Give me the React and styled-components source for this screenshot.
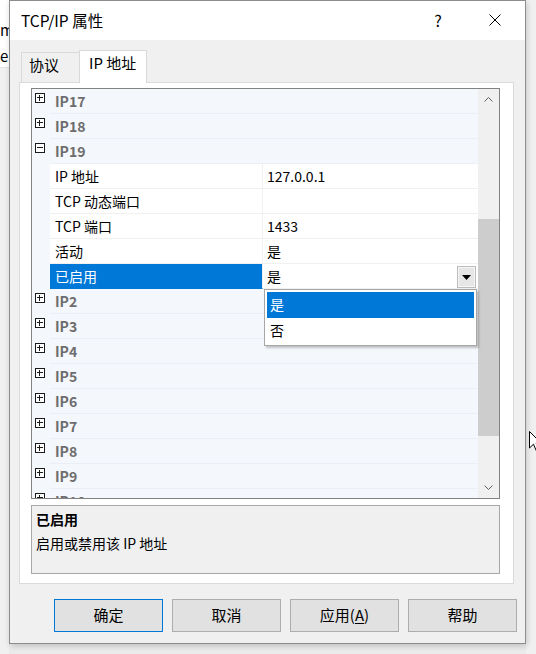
import React from "react";
import styled, { createGlobalStyle } from "styled-components";

const FONT = `"Noto Sans CJK SC", "Noto Sans", sans-serif`;

const GlobalStyle = createGlobalStyle`
  html, body { margin: 0; padding: 0; }
  body { background: #f0f0f0; font-family: ${FONT}; overflow: hidden; }
  *, *::before, *::after { box-sizing: border-box; }
`;

const Screen = styled.div`
  position: relative;
  display: flex;
  width: 536px;
  height: 654px;
  overflow: hidden;
  background: #f0f0f0;
  font-family: ${FONT};
  color: #000;
`;

const BackWindow = styled.div`
  width: 9px;
  flex: none;
  display: flex;
  flex-direction: column;
`;

const BackWindowTop = styled.div`
  height: 68px;
  flex: none;
  background: #fff;
  overflow: hidden;
  padding-top: 17px;
  font-size: 15px;
  line-height: 26px;
  white-space: nowrap;
  border-bottom: 1px solid #e2e2e2;
`;

const BackWindowRest = styled.div`
  flex: 1;
  background: #f0f0f0;
`;

const DialogColumn = styled.div`
  width: 517px;
  flex: none;
  display: flex;
  flex-direction: column;
`;

const Dialog = styled.div`
  position: relative;
  z-index: 1;
  height: 644px;
  flex: none;
  display: flex;
  flex-direction: column;
  border: 1px solid #8d8d8d;
  background: #f0f0f0;
  box-shadow: 1px 2px 6px rgba(0, 0, 0, 0.18);
`;

const BelowDialog = styled.div`
  flex: 1;
  background: #ebebeb;
`;

const RightStrip = styled.div`
  flex: 1;
  background: #f0f0f0;
`;

const TitleBar = styled.div`
  height: 39px;
  flex: none;
  display: flex;
  align-items: center;
  background: #fff;
  padding-left: 11px;
  padding-right: 8px;
  padding-bottom: 2px;
`;

const Title = styled.div`
  flex: 1;
  font-size: 15.5px;
  line-height: 20px;
`;

const CaptionButton = styled.div`
  width: ${(p) => p.$w}px;
  margin-right: ${(p) => p.$mr || 0}px;
  display: flex;
  align-items: center;
  justify-content: center;
  font-size: 16px;
  line-height: 20px;
`;

const Body = styled.div`
  flex: 1;
  display: flex;
  flex-direction: column;
  padding: 10px 0 11px 9px;
`;

const TabStrip = styled.div`
  height: 32px;
  flex: none;
  display: flex;
  align-items: flex-start;
  padding-left: 2px;
`;

const Tab = styled.div`
  position: relative;
  z-index: ${(p) => (p.$active ? 2 : 0)};
  width: ${(p) => p.$w}px;
  height: ${(p) => (p.$active ? 33 : 30)}px;
  margin-top: ${(p) => (p.$active ? 0 : 2)}px;
  padding-left: ${(p) => p.$pl}px;
  padding-top: 2px;
  background: ${(p) => (p.$active ? "#fff" : "#f0f0f0")};
  border: 1px solid #d9d9d9;
  border-bottom: none;
  border-right: ${(p) => (p.$active ? "1px solid #d9d9d9" : "none")};
  font-size: 15px;
  line-height: 20px;
  white-space: nowrap;
`;

const TabPanel = styled.div`
  position: relative;
  z-index: 1;
  display: flex;
  flex-direction: column;
  margin-right: 11px;
  background: #fff;
  border: 1px solid #dadada;
  padding: 5px 13px 9px 11px;
`;

const Grid = styled.div`
  position: relative;
  height: 411px;
  flex: none;
  display: flex;
  border: 1px solid #828282;
  background: #fff;
`;

const Rows = styled.div`
  flex: 1;
  overflow: hidden;
  display: flex;
  flex-direction: column;
`;

const Row = styled.div`
  height: 25px;
  flex: none;
  display: flex;
  background: ${(p) => (p.$category ? "#f4f7fc" : "#fff")};
`;

const Gutter = styled.div`
  width: 18px;
  flex: none;
  background: #f4f7fc;
  padding-left: 3px;
  padding-top: 4px;
`;

const CategoryLabel = styled.div`
  flex: 1;
  padding-left: 5px;
  font-size: 14px;
  font-weight: 700;
  line-height: 24px;
  color: #6d6d6d;
  border-bottom: 1px solid #eaeef6;
  white-space: nowrap;
`;

const NameCell = styled.div`
  width: 213px;
  flex: none;
  padding-left: 5px;
  font-size: 14px;
  line-height: 24px;
  white-space: nowrap;
  color: ${(p) => (p.$selected ? "#fff" : "#000")};
  background: ${(p) => (p.$selected ? "#0078d7" : "#fff")};
  border-bottom: 1px solid ${(p) => (p.$selected ? "#0078d7" : "#f0f0f0")};
  border-right: 1px solid #f0f0f0;
`;

const ValueCell = styled.div`
  flex: 1;
  display: flex;
  align-items: flex-start;
  padding-left: 4px;
  font-size: 14px;
  line-height: 24px;
  border-bottom: 1px solid #f0f0f0;
  white-space: nowrap;
`;

const ValueText = styled.span`
  flex: 1;
`;

const DropButton = styled.div`
  width: 19px;
  height: 22px;
  margin-top: 2px;
  margin-right: 2px;
  display: flex;
  align-items: center;
  justify-content: center;
  background: #e6e6e6;
  border: 1px solid #bcbcbc;
  box-shadow: inset 0 0 0 1px #f6f6f6;
`;

const Dropdown = styled.div`
  position: absolute;
  left: 232px;
  top: 200px;
  width: 213px;
  z-index: 3;
  padding: 2px;
  background: #fff;
  border: 1px solid #a6a6a6;
  box-shadow: 2px 2px 2px rgba(0, 0, 0, 0.22);
`;

const DropItem = styled.div`
  height: 25.5px;
  padding-left: 3px;
  font-size: 14px;
  line-height: 25px;
  color: ${(p) => (p.$active ? "#fff" : "#000")};
  background: ${(p) => (p.$active ? "#0078d7" : "transparent")};
`;

const Scrollbar = styled.div`
  width: 21px;
  flex: none;
  display: flex;
  flex-direction: column;
  background: #f0f0f0;
`;

const ScrollArrow = styled.div`
  height: 21px;
  flex: none;
  display: flex;
  align-items: center;
  justify-content: center;
`;

const ScrollTrack = styled.div`
  flex: 1;
`;

const ScrollThumb = styled.div`
  margin-top: ${(p) => p.$top}px;
  height: ${(p) => p.$height}px;
  background: #cdcdcd;
`;

const DescBox = styled.div`
  height: 69px;
  flex: none;
  margin-top: 6px;
  padding: 3px 4px;
  background: #f0f0f0;
  border: 1px solid #a8a8a8;
`;

const DescTitle = styled.div`
  font-size: 14px;
  font-weight: 700;
  line-height: 20px;
`;

const DescText = styled.div`
  margin-top: 4px;
  font-size: 14px;
  line-height: 20px;
`;

const ButtonRow = styled.div`
  margin-top: 15px;
  display: flex;
  justify-content: flex-end;
  gap: 9px;
  padding-right: 8px;
`;

const Button = styled.div`
  width: 109px;
  height: 33px;
  display: flex;
  align-items: center;
  justify-content: center;
  background: #e1e1e1;
  border: 1px solid ${(p) => (p.$default ? "#0078d7" : "#adadad")};
  font-size: 15px;
  line-height: 20px;
  padding-bottom: 1px;
`;

const Underline = styled.span`
  text-decoration: underline;
  text-underline-offset: 2px;
`;

const Cursor = styled.svg`
  position: absolute;
  left: 529px;
  top: 431px;
  z-index: 5;
`;

const ExpandIcon = ({ open }) => (
  <svg width="10" height="10" viewBox="0 0 10 10" style={{ display: "block" }}>
    <rect x="0.5" y="0.5" width="9" height="9" fill="#fff" stroke="#1a1a1a" />
    <line x1="2" y1="4.5" x2="8" y2="4.5" stroke="#1a1a1a" />
    {!open && <line x1="4.5" y1="2" x2="4.5" y2="8" stroke="#1a1a1a" />}
  </svg>
);

const Chevron = ({ down }) => (
  <svg width="9" height="5" viewBox="0 0 9 5">
    <polyline
      points={down ? "0.5,0.5 4.5,4.5 8.5,0.5" : "0.5,4.5 4.5,0.5 8.5,4.5"}
      fill="none"
      stroke="#606060"
      strokeWidth="1"
    />
  </svg>
);

const rows = [
  { cat: "IP17" },
  { cat: "IP18" },
  { cat: "IP19", open: true },
  { name: "IP 地址", value: "127.0.0.1" },
  { name: "TCP 动态端口", value: "" },
  { name: "TCP 端口", value: "1433" },
  { name: "活动", value: "是" },
  { name: "已启用", value: "是", selected: true },
  { cat: "IP2" },
  { cat: "IP3" },
  { cat: "IP4" },
  { cat: "IP5" },
  { cat: "IP6" },
  { cat: "IP7" },
  { cat: "IP8" },
  { cat: "IP9" },
  { cat: "IP10" },
];

export default function App() {
  return (
    <>
      <GlobalStyle />
      <Screen>
        <BackWindow>
          <BackWindowTop>
            <div>m</div>
            <div>e:</div>
          </BackWindowTop>
          <BackWindowRest />
        </BackWindow>

        <DialogColumn>
          <Dialog>
            <TitleBar>
              <Title>TCP/IP 属性</Title>
              <CaptionButton $w={46} $mr={11}>?</CaptionButton>
              <CaptionButton $w={45}>
                <svg width="12" height="12" viewBox="0 0 12 12">
                  <line x1="0.5" y1="0.5" x2="11.5" y2="11.5" stroke="#000" strokeWidth="1" />
                  <line x1="11.5" y1="0.5" x2="0.5" y2="11.5" stroke="#000" strokeWidth="1" />
                </svg>
              </CaptionButton>
            </TitleBar>

            <Body>
              <TabStrip>
                <Tab $w={58} $pl={7}>协议</Tab>
                <Tab $w={68} $pl={9} $active>IP 地址</Tab>
              </TabStrip>

              <TabPanel>
                <Grid>
                  <Rows>
                    {rows.map((r, i) =>
                      r.cat ? (
                        <Row key={i} $category>
                          <Gutter>
                            <ExpandIcon open={r.open} />
                          </Gutter>
                          <CategoryLabel>{r.cat}</CategoryLabel>
                        </Row>
                      ) : (
                        <Row key={i}>
                          <Gutter />
                          <NameCell $selected={r.selected}>{r.name}</NameCell>
                          <ValueCell>
                            <ValueText>{r.value}</ValueText>
                            {r.selected && (
                              <DropButton>
                                <svg width="9" height="5" viewBox="0 0 9 5">
                                  <polygon points="0,0 9,0 4.5,5" fill="#000" />
                                </svg>
                              </DropButton>
                            )}
                          </ValueCell>
                        </Row>
                      )
                    )}
                  </Rows>
                  <Scrollbar>
                    <ScrollArrow>
                      <Chevron />
                    </ScrollArrow>
                    <ScrollTrack>
                      <ScrollThumb $top={109} $height={217} />
                    </ScrollTrack>
                    <ScrollArrow>
                      <Chevron down />
                    </ScrollArrow>
                  </Scrollbar>

                  <Dropdown>
                    <DropItem $active>是</DropItem>
                    <DropItem>否</DropItem>
                  </Dropdown>
                </Grid>

                <DescBox>
                  <DescTitle>已启用</DescTitle>
                  <DescText>启用或禁用该 IP 地址</DescText>
                </DescBox>
              </TabPanel>

              <ButtonRow>
                <Button $default>确定</Button>
                <Button>取消</Button>
                <Button>
                  应用(<Underline>A</Underline>)
                </Button>
                <Button>帮助</Button>
              </ButtonRow>
            </Body>
          </Dialog>
          <BelowDialog />
        </DialogColumn>

        <RightStrip />

        <Cursor width="13" height="21" viewBox="0 0 13 21">
          <path
            d="M0.5 0.5 L0.5 17 L4.5 13.2 L7.3 19.8 L9.8 18.7 L7.1 12.3 L12.3 12.3 Z"
            fill="#fff"
            stroke="#000"
            strokeWidth="1"
            strokeLinejoin="miter"
          />
        </Cursor>
      </Screen>
    </>
  );
}
